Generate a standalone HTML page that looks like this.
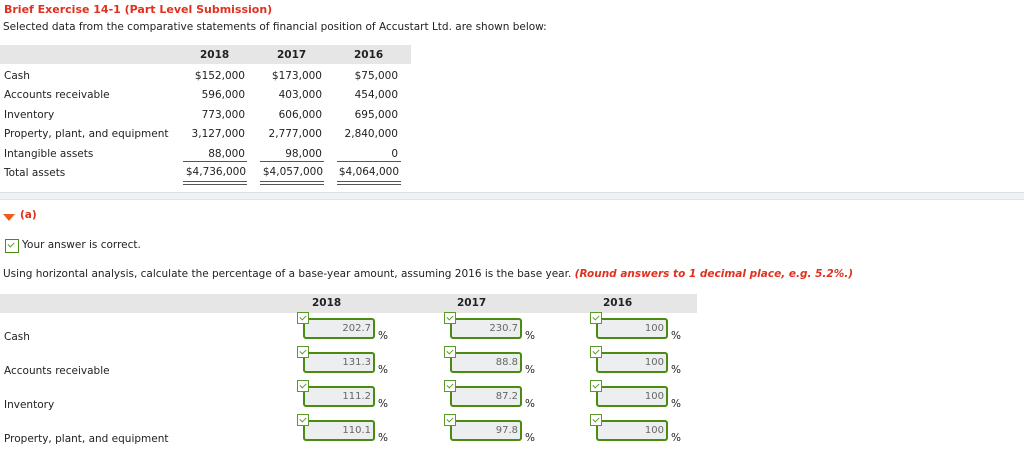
<!DOCTYPE html>
<html><head><style>
body{margin:0;width:1024px;height:462px;background:#fff;font-family:"DejaVu Sans","Liberation Sans",sans-serif;font-size:10.5px;color:#222;position:relative;overflow:hidden}
.a{position:absolute;white-space:nowrap}
.r{text-align:right}
.box{position:absolute;width:72px;height:21px;border:2px solid #4a8c12;border-radius:3px;background:#eceef0;color:#666;text-align:right;box-sizing:border-box;padding:3px 2px 0 0;font-size:10px}
.ck{position:absolute;width:10px;height:10px;border:1px solid #5a9a2a;background:#fff}
.ck:after{content:"";position:absolute;left:3px;top:1px;width:3px;height:5px;border:solid #5a9a2a;border-width:0 1.3px 1.3px 0;transform:rotate(45deg)}
.pc{position:absolute;font-size:10.5px}
</style></head><body>
<div class="a" style="left:4px;top:3px;color:#e0301e;font-weight:bold;font-size:11px">Brief Exercise 14-1 (Part Level Submission)</div>
<div class="a" style="left:3px;top:21px">Selected data from the comparative statements of financial position of Accustart Ltd. are shown below:</div>
<div class="a" style="left:0;top:45px;width:411px;height:19px;background:#e6e6e6"></div>
<div class="a" style="left:200px;top:49px;font-weight:bold">2018</div>
<div class="a" style="left:277px;top:49px;font-weight:bold">2017</div>
<div class="a" style="left:354px;top:49px;font-weight:bold">2016</div>
<div class="a" style="left:4px;top:67px;line-height:19.4px">Cash<br>Accounts receivable<br>Inventory<br>Property, plant, and equipment<br>Intangible assets</div>
<div class="a r" style="left:160px;width:85px;top:67px;line-height:19.4px">$152,000<br>596,000<br>773,000<br>3,127,000<br>88,000</div>
<div class="a r" style="left:240px;width:82px;top:67px;line-height:19.4px">$173,000<br>403,000<br>606,000<br>2,777,000<br>98,000</div>
<div class="a r" style="left:320px;width:78px;top:67px;line-height:19.4px">$75,000<br>454,000<br>695,000<br>2,840,000<br>0</div>
<div class="a" style="left:183px;top:161px;width:64px;border-top:1px solid #555"></div>
<div class="a" style="left:260px;top:161px;width:64px;border-top:1px solid #555"></div>
<div class="a" style="left:337px;top:161px;width:64px;border-top:1px solid #555"></div>
<div class="a" style="left:4px;top:167px">Total assets</div>
<div class="a r" style="left:160px;width:86px;top:166px">$4,736,000</div>
<div class="a r" style="left:240px;width:83px;top:166px">$4,057,000</div>
<div class="a r" style="left:320px;width:79px;top:166px">$4,064,000</div>
<div class="a" style="left:183px;top:181px;width:64px;height:2px;border-top:1px solid #555;border-bottom:1px solid #555"></div>
<div class="a" style="left:260px;top:181px;width:64px;height:2px;border-top:1px solid #555;border-bottom:1px solid #555"></div>
<div class="a" style="left:337px;top:181px;width:64px;height:2px;border-top:1px solid #555;border-bottom:1px solid #555"></div>
<div class="a" style="left:0;top:192px;width:1024px;height:6px;border-top:1px solid #d8e0e8;background:#eef2f5;border-bottom:1px solid #dde3ea"></div>
<div class="a" style="left:3px;top:214px;width:0;height:0;border-left:6px solid transparent;border-right:6px solid transparent;border-top:7px solid #f25a1a"></div>
<div class="a" style="left:20px;top:209px;color:#e0301e;font-weight:bold">(a)</div>
<div class="ck" style="left:5px;top:239px;width:12px;height:12px;border-color:#4a8c12"></div>
<div class="a" style="left:22px;top:239px">Your answer is correct.</div>
<div class="a" style="left:3px;top:268px">Using horizontal analysis, calculate the percentage of a base-year amount, assuming 2016 is the base year. <b style="color:#e0301e;font-style:italic">(Round answers to 1 decimal place, e.g. 5.2%.)</b></div>
<div class="a" style="left:0;top:294px;width:697px;height:19px;background:#e6e6e6"></div>
<div class="a" style="left:312px;top:297px;font-weight:bold">2018</div>
<div class="a" style="left:457px;top:297px;font-weight:bold">2017</div>
<div class="a" style="left:603px;top:297px;font-weight:bold">2016</div>
<div class="a" style="left:4px;top:331px">Cash</div>
<div class="a" style="left:4px;top:365px">Accounts receivable</div>
<div class="a" style="left:4px;top:399px">Inventory</div>
<div class="a" style="left:4px;top:433px">Property, plant, and equipment</div>

<div class="box" style="left:303px;top:318px">202.7</div><div class="ck" style="left:297px;top:312px"></div><div class="pc" style="left:378px;top:330px">%</div>
<div class="box" style="left:303px;top:352px">131.3</div><div class="ck" style="left:297px;top:346px"></div><div class="pc" style="left:378px;top:364px">%</div>
<div class="box" style="left:303px;top:386px">111.2</div><div class="ck" style="left:297px;top:380px"></div><div class="pc" style="left:378px;top:398px">%</div>
<div class="box" style="left:303px;top:420px">110.1</div><div class="ck" style="left:297px;top:414px"></div><div class="pc" style="left:378px;top:432px">%</div>

<div class="box" style="left:450px;top:318px">230.7</div><div class="ck" style="left:444px;top:312px"></div><div class="pc" style="left:525px;top:330px">%</div>
<div class="box" style="left:450px;top:352px">88.8</div><div class="ck" style="left:444px;top:346px"></div><div class="pc" style="left:525px;top:364px">%</div>
<div class="box" style="left:450px;top:386px">87.2</div><div class="ck" style="left:444px;top:380px"></div><div class="pc" style="left:525px;top:398px">%</div>
<div class="box" style="left:450px;top:420px">97.8</div><div class="ck" style="left:444px;top:414px"></div><div class="pc" style="left:525px;top:432px">%</div>

<div class="box" style="left:596px;top:318px">100</div><div class="ck" style="left:590px;top:312px"></div><div class="pc" style="left:671px;top:330px">%</div>
<div class="box" style="left:596px;top:352px">100</div><div class="ck" style="left:590px;top:346px"></div><div class="pc" style="left:671px;top:364px">%</div>
<div class="box" style="left:596px;top:386px">100</div><div class="ck" style="left:590px;top:380px"></div><div class="pc" style="left:671px;top:398px">%</div>
<div class="box" style="left:596px;top:420px">100</div><div class="ck" style="left:590px;top:414px"></div><div class="pc" style="left:671px;top:432px">%</div>
</body></html>
